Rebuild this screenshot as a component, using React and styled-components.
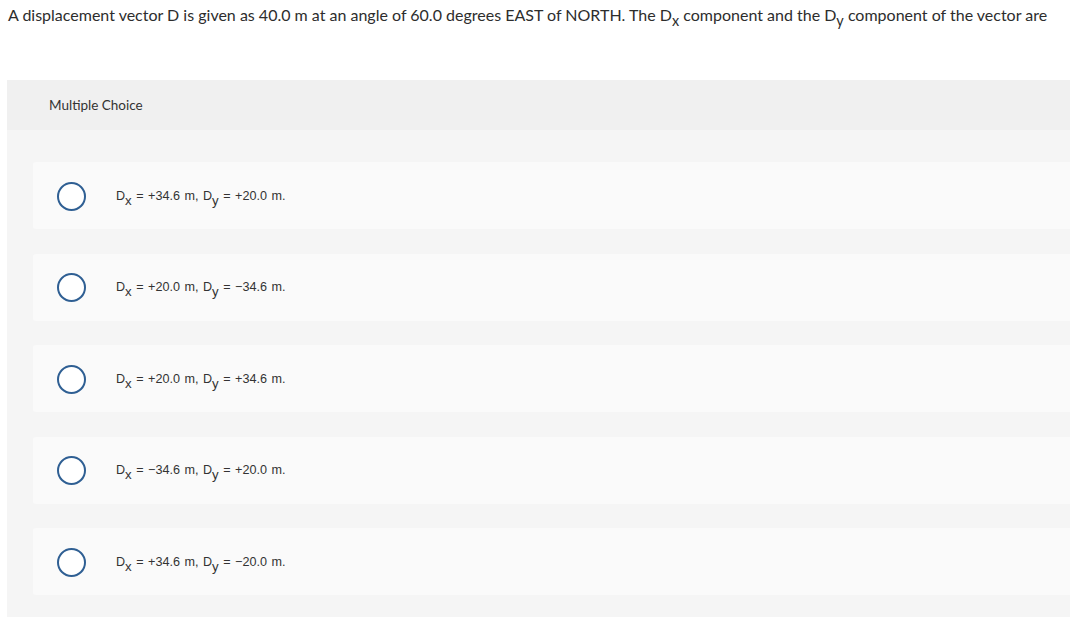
import React from "react";
import styled, { createGlobalStyle } from "styled-components";

const GlobalStyle = createGlobalStyle`
    html, body {
        margin: 0;
        padding: 0;
        background: #fff;
        overflow: hidden;
    }
    body {
        font-family: Lato, "Liberation Sans", sans-serif;
        color: #333;
    }
`;

const Page = styled.div`
    padding: 5px 0 0 7px;
    width: 1100px;
`;

const Question = styled.p`
    margin: 0 0 0 1px;
    font-size: 16px;
    line-height: 19px;
    color: #2d2d2d;
    white-space: nowrap;
`;

const Sub = styled.sub`
    font-size: ${(p) => p.$size || "0.9em"};
    vertical-align: -0.35em;
    line-height: 0;
`;

const Panel = styled.section`
    margin-top: 56px;
    background: #f5f5f5;
    padding-bottom: 24px;
`;

const PanelHeader = styled.div`
    height: 50px;
    background: #f0f0f0;
    display: flex;
    align-items: center;
    padding-left: 42px;
    font-size: 13.5px;
    color: #333;
`;

const Options = styled.div`
    display: flex;
    flex-direction: column;
    gap: 24.5px;
    padding: 32px 0 0 26px;
`;

const Option = styled.label`
    height: 67px;
    background: #fafafa;
    border-radius: 3px;
    display: flex;
    align-items: center;
    padding-left: 24px;
    gap: 30px;
    cursor: pointer;
`;

const Radio = styled.span`
    width: 25px;
    height: 25px;
    border-radius: 50%;
    border: 2px solid #2f5f93;
    background: #fff;
    flex: none;
    margin-top: 1px;
`;

const OptionText = styled.span`
    font-family: "Liberation Sans", Arial, sans-serif;
    font-size: 12.6px;
    color: #333;
    word-spacing: 1px;
`;

const D = ({ sub, size }) => (
    <>
        D<Sub $size={size}>{sub}</Sub>
    </>
);

const choices = [
    ["+34.6", "+20.0"],
    ["+20.0", "\u221234.6"],
    ["+20.0", "+34.6"],
    ["\u221234.6", "+20.0"],
    ["+34.6", "\u221220.0"],
];

export default function App() {
    return (
        <Page>
            <GlobalStyle />
            <Question>
                A displacement vector D is given as 40.0 m at an angle of 60.0 degrees EAST of NORTH. The <D sub="x" /> component and the <D sub="y" /> component of the vector are
            </Question>
            <Panel>
                <PanelHeader>Multiple Choice</PanelHeader>
                <Options>
                    {choices.map(([x, y], i) => (
                        <Option key={i}>
                            <Radio />
                            <OptionText>
                                <D sub="x" size="1.05em" /> = {x} m, <D sub="y" size="1.05em" /> = {y} m.
                            </OptionText>
                        </Option>
                    ))}
                </Options>
            </Panel>
        </Page>
    );
}
